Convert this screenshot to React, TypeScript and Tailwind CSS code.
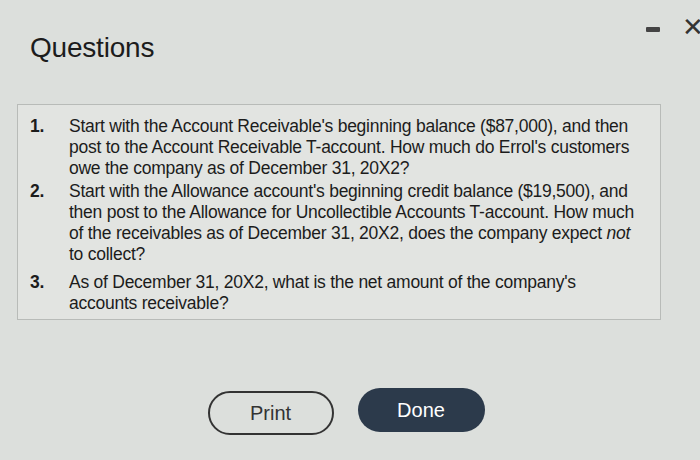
import React from 'react';

const items: React.ReactNode[][] = [
  [
    "Start with the Account Receivable's beginning balance ($87,000), and then",
    "post to the Account Receivable T-account. How much do Errol's customers",
    'owe the company as of December 31, 20X2?',
  ],
  [
    "Start with the Allowance account's beginning credit balance ($19,500), and",
    'then post to the Allowance for Uncollectible Accounts T-account. How much',
    <>of the receivables as of December 31, 20X2, does the company expect <i>not</i></>,
    'to collect?',
  ],
  [
    "As of December 31, 20X2, what is the net amount of the company's",
    'accounts receivable?',
  ],
];

export default function App() {
  return (
    <div
      className="w-[700px] h-[460px] overflow-hidden bg-[#dcdfdc] text-[#1c1c1c] relative"
      style={{ fontFamily: '"Liberation Sans", Arial, sans-serif' }}
    >
      <div className="absolute top-[14px] right-[-4px] flex items-center gap-[22px] text-[#333]">
        <div className="w-[14px] h-[5px] bg-[#444] rounded-[1px] mt-[4px]" />
        <span className="text-[26px] leading-none font-light">✕</span>
      </div>

      <h1 className="pl-[30px] pt-[32px] text-[28px] leading-[32px] tracking-[-0.2px] text-[#1c1c1c]">Questions</h1>

      <div className="ml-[17px] mt-[40px] w-[644px] h-[216px] border border-[#b8bbb8] bg-[#e2e4e1] pt-[11px] pl-[12px] pr-[10px]">
        <ol className="flex flex-col">
          {items.map((lines, i) => (
            <li key={i} className={`flex text-[17.5px] leading-[21px] tracking-[-0.25px] ${i === 1 ? 'mt-[2px]' : ''} ${i === 2 ? 'mt-[7px]' : ''}`}>
              <span className="w-[39px] shrink-0 font-bold">{i + 1}.</span>
              <span className="flex flex-col whitespace-nowrap">
                {lines.map((l, j) => (
                  <span key={j}>{l}</span>
                ))}
              </span>
            </li>
          ))}
        </ol>
      </div>

      <div className="flex justify-center gap-[24px] mt-[68px] ml-[-8px]">
        <button className="w-[126px] h-[44px] rounded-full border-2 border-[#333] text-[20px] text-[#333] mt-[3px]">Print</button>
        <button className="w-[127px] h-[44px] rounded-full bg-[#2c3a4b] text-[20px] text-white">Done</button>
      </div>
    </div>
  );
}
